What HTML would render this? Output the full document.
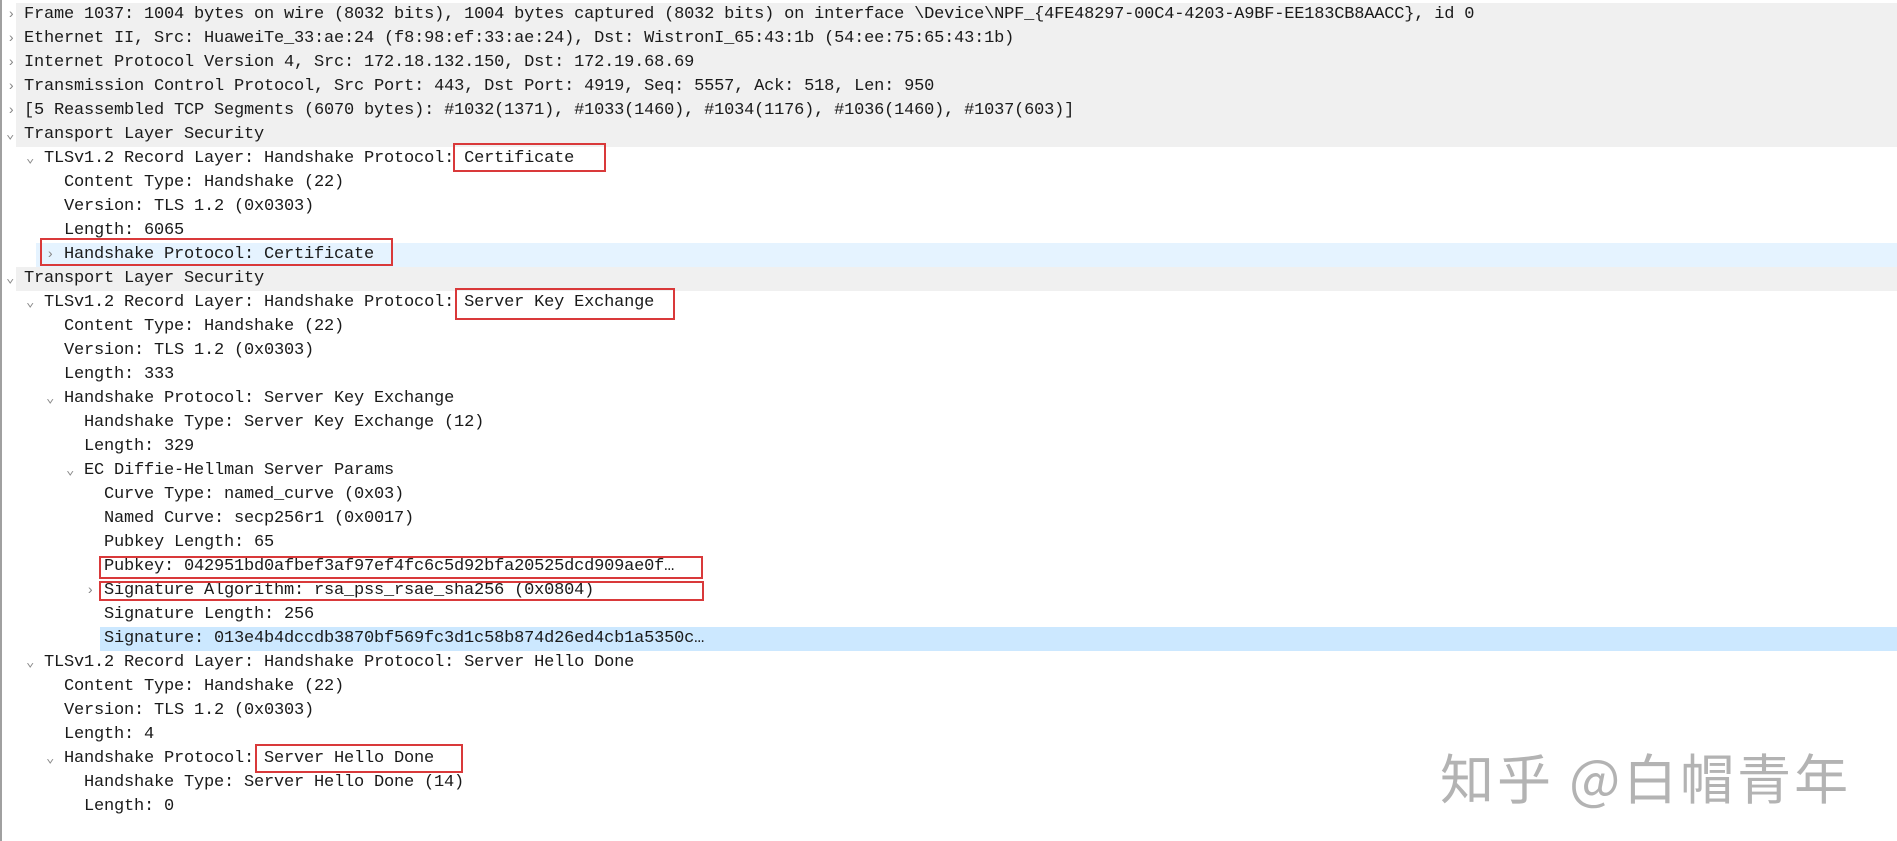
<!DOCTYPE html>
<html><head><meta charset="utf-8"><style>
html,body{margin:0;padding:0;background:#fff;width:1897px;height:841px;overflow:hidden;position:relative}
.b{position:absolute;left:0;top:0;width:2px;height:841px;background:#a0a0a0}
.r{position:absolute;left:16px;right:0;height:24px;font-family:"Liberation Mono",monospace;font-size:17px;line-height:24px;color:#1a1a1a;white-space:pre;letter-spacing:-0.2px}
.g{background:#f0f0f0}
.lb{background:#e5f3ff}
.sb{background:#cce8ff}
.a{position:absolute;color:#888;font-size:14px}
.box{position:absolute;border:2.5px solid #d9393a;box-sizing:border-box}
.wm{position:absolute;left:1440px;top:736px;font-family:"Noto Sans CJK SC",sans-serif;font-size:54px;color:#b3b3b3;letter-spacing:3px;white-space:nowrap}
</style></head><body>
<div class="b"></div>
<div class="r g" style="top:3px"><span class="a" style="left:-9px">›</span><span style="position:absolute;left:8px">Frame 1037: 1004 bytes on wire (8032 bits), 1004 bytes captured (8032 bits) on interface \Device\NPF_{4FE48297-00C4-4203-A9BF-EE183CB8AACC}, id 0</span></div>
<div class="r g" style="top:27px"><span class="a" style="left:-9px">›</span><span style="position:absolute;left:8px">Ethernet II, Src: HuaweiTe_33:ae:24 (f8:98:ef:33:ae:24), Dst: WistronI_65:43:1b (54:ee:75:65:43:1b)</span></div>
<div class="r g" style="top:51px"><span class="a" style="left:-9px">›</span><span style="position:absolute;left:8px">Internet Protocol Version 4, Src: 172.18.132.150, Dst: 172.19.68.69</span></div>
<div class="r g" style="top:75px"><span class="a" style="left:-9px">›</span><span style="position:absolute;left:8px">Transmission Control Protocol, Src Port: 443, Dst Port: 4919, Seq: 5557, Ack: 518, Len: 950</span></div>
<div class="r g" style="top:99px"><span class="a" style="left:-9px">›</span><span style="position:absolute;left:8px">[5 Reassembled TCP Segments (6070 bytes): #1032(1371), #1033(1460), #1034(1176), #1036(1460), #1037(603)]</span></div>
<div class="r g" style="top:123px"><span class="a" style="left:-10px">⌄</span><span style="position:absolute;left:8px">Transport Layer Security</span></div>
<div class="r" style="top:147px"><span class="a" style="left:10px">⌄</span><span style="position:absolute;left:28px">TLSv1.2 Record Layer: Handshake Protocol: Certificate</span></div>
<div class="r" style="top:171px"><span style="position:absolute;left:48px">Content Type: Handshake (22)</span></div>
<div class="r" style="top:195px"><span style="position:absolute;left:48px">Version: TLS 1.2 (0x0303)</span></div>
<div class="r" style="top:219px"><span style="position:absolute;left:48px">Length: 6065</span></div>
<div class="r lb" style="top:243px;left:36px"><span class="a" style="left:10px">›</span><span style="position:absolute;left:28px">Handshake Protocol: Certificate</span></div>
<div class="r g" style="top:267px"><span class="a" style="left:-10px">⌄</span><span style="position:absolute;left:8px">Transport Layer Security</span></div>
<div class="r" style="top:291px"><span class="a" style="left:10px">⌄</span><span style="position:absolute;left:28px">TLSv1.2 Record Layer: Handshake Protocol: Server Key Exchange</span></div>
<div class="r" style="top:315px"><span style="position:absolute;left:48px">Content Type: Handshake (22)</span></div>
<div class="r" style="top:339px"><span style="position:absolute;left:48px">Version: TLS 1.2 (0x0303)</span></div>
<div class="r" style="top:363px"><span style="position:absolute;left:48px">Length: 333</span></div>
<div class="r" style="top:387px"><span class="a" style="left:30px">⌄</span><span style="position:absolute;left:48px">Handshake Protocol: Server Key Exchange</span></div>
<div class="r" style="top:411px"><span style="position:absolute;left:68px">Handshake Type: Server Key Exchange (12)</span></div>
<div class="r" style="top:435px"><span style="position:absolute;left:68px">Length: 329</span></div>
<div class="r" style="top:459px"><span class="a" style="left:50px">⌄</span><span style="position:absolute;left:68px">EC Diffie-Hellman Server Params</span></div>
<div class="r" style="top:483px"><span style="position:absolute;left:88px">Curve Type: named_curve (0x03)</span></div>
<div class="r" style="top:507px"><span style="position:absolute;left:88px">Named Curve: secp256r1 (0x0017)</span></div>
<div class="r" style="top:531px"><span style="position:absolute;left:88px">Pubkey Length: 65</span></div>
<div class="r" style="top:555px"><span style="position:absolute;left:88px">Pubkey: 042951bd0afbef3af97ef4fc6c5d92bfa20525dcd909ae0f…</span></div>
<div class="r" style="top:579px"><span class="a" style="left:70px">›</span><span style="position:absolute;left:88px">Signature Algorithm: rsa_pss_rsae_sha256 (0x0804)</span></div>
<div class="r" style="top:603px"><span style="position:absolute;left:88px">Signature Length: 256</span></div>
<div class="r sb" style="top:627px;left:100px"><span style="position:absolute;left:4px">Signature: 013e4b4dccdb3870bf569fc3d1c58b874d26ed4cb1a5350c…</span></div>
<div class="r" style="top:651px"><span class="a" style="left:10px">⌄</span><span style="position:absolute;left:28px">TLSv1.2 Record Layer: Handshake Protocol: Server Hello Done</span></div>
<div class="r" style="top:675px"><span style="position:absolute;left:48px">Content Type: Handshake (22)</span></div>
<div class="r" style="top:699px"><span style="position:absolute;left:48px">Version: TLS 1.2 (0x0303)</span></div>
<div class="r" style="top:723px"><span style="position:absolute;left:48px">Length: 4</span></div>
<div class="r" style="top:747px"><span class="a" style="left:30px">⌄</span><span style="position:absolute;left:48px">Handshake Protocol: Server Hello Done</span></div>
<div class="r" style="top:771px"><span style="position:absolute;left:68px">Handshake Type: Server Hello Done (14)</span></div>
<div class="r" style="top:795px"><span style="position:absolute;left:68px">Length: 0</span></div>

<div class="box" style="left:453px;top:143px;width:153px;height:29px"></div>
<div class="box" style="left:40px;top:238px;width:353px;height:28px"></div>
<div class="box" style="left:455px;top:288px;width:220px;height:32px"></div>
<div class="box" style="left:99px;top:556px;width:604px;height:23px"></div>
<div class="box" style="left:99px;top:581px;width:605px;height:20px"></div>
<div class="box" style="left:255px;top:744px;width:208px;height:29px"></div>

<div class="wm">知乎 @白帽青年</div>
</body></html>
